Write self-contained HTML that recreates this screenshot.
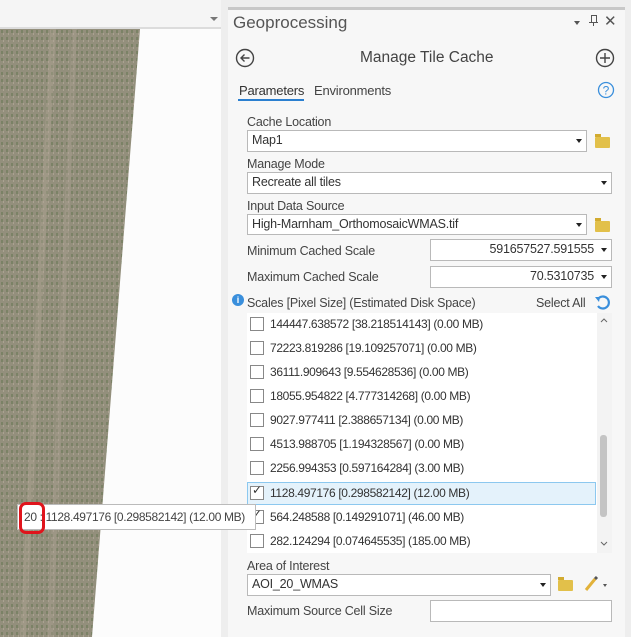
<!DOCTYPE html>
<html><head><style>
body{margin:0;width:631px;height:637px;overflow:hidden;background:#eeeeee;font-family:"Liberation Sans",sans-serif;position:relative;color:#333}
.a{position:absolute}
.lbl{position:absolute;font-size:12.5px;color:#444;letter-spacing:-0.2px}
.box{position:absolute;background:#fff;border:1px solid #b9b9b9;box-sizing:border-box;font-size:12.5px;color:#333;line-height:19px;padding-left:4px;letter-spacing:-0.2px}
.dd{position:absolute;right:4px;top:8px;width:0;height:0;border-left:3px solid transparent;border-right:3px solid transparent;border-top:4px solid #222}
.row{position:absolute;left:250px;font-size:12px;color:#333;height:24px;line-height:24px;letter-spacing:-0.35px;white-space:nowrap}
.cb{display:inline-block;width:12px;height:12px;border:1px solid #888;background:#fff;vertical-align:middle;margin-right:6px;margin-top:-2px;position:relative}
.fold{position:absolute;width:15px;height:11px;background:#e2c04a;border-radius:1px}
.fold:before{content:"";position:absolute;left:0;top:-3px;width:6px;height:3px;background:#d2ab30}
</style></head><body>
<div class="a" style="left:0;top:0;width:221px;height:27px;background:#f5f5f5;border-bottom:2px solid #dcdcdc"></div>
<div class="a" style="left:210px;top:17px;border-left:4px solid transparent;border-right:4px solid transparent;border-top:4px solid #777"></div>
<div class="a" style="left:0;top:29px;width:221px;height:608px;background:#fcfcfc"></div>
<svg class="a" style="left:0;top:29px" width="221" height="608">
<defs><pattern id="p" width="5" height="7" patternUnits="userSpaceOnUse"><rect width="5" height="7" fill="#938f7c"/><rect x="1" y="1" width="2" height="3" fill="#7b8266"/><rect x="3" y="4" width="1" height="2" fill="#aaa291"/></pattern></defs>
<polygon points="0,0 140,0 92,608 0,608" fill="url(#p)"/>
<polygon points="50,0 56,0 26,608 20,608" fill="#b2a497" opacity=".4"/>
<polygon points="72,0 77,0 53,608 47,608" fill="#b2a497" opacity=".35"/>
</svg>
<div class="a" style="left:228px;top:7px;width:397px;height:630px;background:#f7f7f7;border-top:3px solid #c8c8c8;box-sizing:border-box"></div>
<div class="a" style="left:233px;top:13px;font-size:17px;color:#555">Geoprocessing</div>
<div class="a" style="left:574px;top:21px;border-left:3px solid transparent;border-right:3px solid transparent;border-top:4px solid #555"></div>
<div class="a" style="left:591px;top:15px;width:4px;height:7px;border:1px solid #555;border-bottom:none"></div>
<div class="a" style="left:589px;top:22px;width:9px;height:1px;background:#555"></div>
<div class="a" style="left:593px;top:22px;width:1px;height:4px;background:#555"></div>
<div class="a" style="left:604px;top:12px;font-size:15px;color:#555">✕</div>
<svg class="a" style="left:235px;top:48px" width="20" height="20"><circle cx="10" cy="10" r="8.5" fill="none" stroke="#444" stroke-width="1.4"/><path d="M14.5 10H6M9.5 6.5L6 10l3.5 3.5" fill="none" stroke="#444" stroke-width="1.4"/></svg>
<div class="a" style="left:360px;top:49px;font-size:15.5px;color:#444">Manage Tile Cache</div>
<svg class="a" style="left:595px;top:48px" width="20" height="20"><circle cx="10" cy="10" r="8.5" fill="none" stroke="#444" stroke-width="1.4"/><path d="M10 5v10M5 10h10" stroke="#444" stroke-width="1.4"/></svg>
<div class="a" style="left:239px;top:83px;font-size:13px;color:#333;letter-spacing:-0.2px">Parameters</div>
<div class="a" style="left:238px;top:99px;width:66px;height:2px;background:#2a7fd0"></div>
<div class="a" style="left:314px;top:83px;font-size:13px;color:#444;letter-spacing:-0.2px">Environments</div>
<svg class="a" style="left:597px;top:81px" width="18" height="18"><circle cx="9" cy="9" r="7.5" fill="none" stroke="#3a8fdc" stroke-width="1.3"/><text x="9" y="13.5" font-size="12" fill="#3a8fdc" text-anchor="middle" font-family="Liberation Sans">?</text></svg>

<div class="lbl" style="left:247px;top:115px">Cache Location</div>
<div class="box" style="left:247px;top:130px;width:340px;height:22px">Map1<span class="dd"></span></div>
<div class="fold" style="left:595px;top:137px"></div>
<div class="lbl" style="left:247px;top:157px">Manage Mode</div>
<div class="box" style="left:247px;top:172px;width:365px;height:22px">Recreate all tiles<span class="dd"></span></div>
<div class="lbl" style="left:247px;top:199px">Input Data Source</div>
<div class="box" style="left:247px;top:214px;width:340px;height:21px">High-Marnham_OrthomosaicWMAS.tif<span class="dd"></span></div>
<div class="fold" style="left:595px;top:221px"></div>
<div class="lbl" style="left:247px;top:244px">Minimum Cached Scale</div>
<div class="box" style="left:430px;top:239px;width:182px;height:22px;text-align:right;padding-right:17px">591657527.591555<span class="dd"></span></div>
<div class="lbl" style="left:247px;top:270px">Maximum Cached Scale</div>
<div class="box" style="left:430px;top:266px;width:182px;height:22px;text-align:right;padding-right:17px">70.5310735<span class="dd"></span></div>
<div class="a" style="left:232px;top:294px;width:12px;height:12px;border-radius:50%;background:#3a8fdc;color:#fff;font-size:9px;text-align:center;line-height:12px;font-weight:bold">i</div>
<div class="lbl" style="left:247px;top:296px">Scales [Pixel Size] (Estimated Disk Space)</div>
<div class="lbl" style="left:536px;top:296px">Select All</div>
<svg class="a" style="left:594px;top:294px" width="16" height="16"><path d="M4 5A6 6 0 1 1 4 12" fill="none" stroke="#3a8fdc" stroke-width="2.2"/><path d="M1 3l5 0-1 5z" fill="#3a8fdc"/></svg>

<div class="a" style="left:247px;top:313px;width:365px;height:240px;background:#fff"></div>
<div class="a" style="left:597px;top:313px;width:15px;height:240px;background:#f3f3f3"></div>
<div class="a" style="left:600px;top:435px;width:7px;height:82px;background:#c4c4c4;border-radius:3px"></div>
<svg class="a" style="left:599px;top:316px" width="10" height="8"><path d="M2 6l3-3 3 3" fill="none" stroke="#666"/></svg>
<svg class="a" style="left:599px;top:540px" width="10" height="8"><path d="M2 2l3 3 3-3" fill="none" stroke="#666"/></svg>
<div class="a" style="left:247px;top:482px;width:349px;height:23px;background:#e4f2fb;border:1px solid #8cc8ef;box-sizing:border-box"></div>
<div class="row" style="top:312px"><span class="cb"></span>144447.638572 [38.218514143] (0.00 MB)</div>
<div class="row" style="top:336px"><span class="cb"></span>72223.819286 [19.109257071] (0.00 MB)</div>
<div class="row" style="top:360px"><span class="cb"></span>36111.909643 [9.554628536] (0.00 MB)</div>
<div class="row" style="top:384px"><span class="cb"></span>18055.954822 [4.777314268] (0.00 MB)</div>
<div class="row" style="top:408px"><span class="cb"></span>9027.977411 [2.388657134] (0.00 MB)</div>
<div class="row" style="top:432px"><span class="cb"></span>4513.988705 [1.194328567] (0.00 MB)</div>
<div class="row" style="top:456px"><span class="cb"></span>2256.994353 [0.597164284] (3.00 MB)</div>
<div class="row" style="top:481px"><span class="cb"><span style="position:absolute;left:1px;top:-4px;font-size:12px;line-height:14px">✓</span></span>1128.497176 [0.298582142] (12.00 MB)</div>
<div class="row" style="top:505px"><span class="cb"><span style="position:absolute;left:1px;top:-4px;font-size:12px;line-height:14px">✓</span></span>564.248588 [0.149291071] (46.00 MB)</div>
<div class="row" style="top:529px"><span class="cb"></span>282.124294 [0.074645535] (185.00 MB)</div>

<div class="a" style="left:17px;top:504px;width:239px;height:26px;background:#fff;border:1px solid #bbb;box-sizing:border-box;font-size:12px;letter-spacing:-0.35px;white-space:nowrap;line-height:24px;padding-left:6px;color:#444">20 : 1128.497176 [0.298582142] (12.00 MB)</div>
<div class="a" style="left:19px;top:502px;width:26px;height:32px;border:3px solid #e0141c;border-radius:7px;box-sizing:border-box"></div>

<div class="lbl" style="left:247px;top:559px">Area of Interest</div>
<div class="box" style="left:247px;top:574px;width:304px;height:22px">AOI_20_WMAS<span class="dd"></span></div>
<div class="fold" style="left:558px;top:580px"></div>
<svg class="a" style="left:583px;top:575px" width="28" height="18"><path d="M3 15L12 4" stroke="#e2b23a" stroke-width="3"/><path d="M12 4l2-2" stroke="#555" stroke-width="3"/><path d="M20 9l2 3 2-3z" fill="#555"/></svg>
<div class="lbl" style="left:247px;top:604px">Maximum Source Cell Size</div>
<div class="box" style="left:430px;top:600px;width:182px;height:22px"></div>
</body></html>
